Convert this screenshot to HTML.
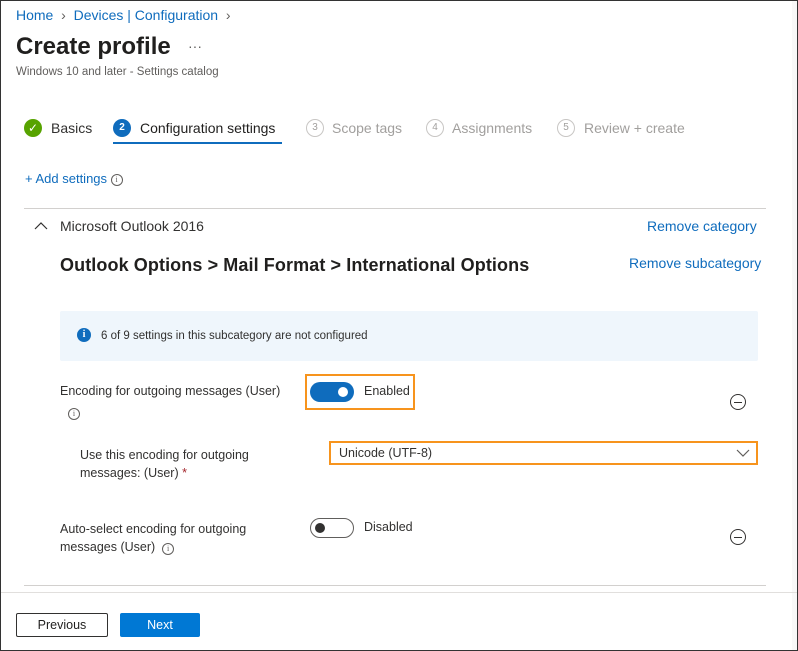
<!DOCTYPE html>
<html><head><style>
*{margin:0;padding:0;box-sizing:border-box}
body{width:798px;height:651px;overflow:hidden;background:#fff;font-family:"Liberation Sans",sans-serif;color:#323130;position:relative}
.frame{position:absolute;left:0;top:0;width:798px;height:651px;border:1px solid #333;pointer-events:none;z-index:9}
.a{position:absolute;white-space:nowrap}
.blue{color:#0f6cbd}
.gray{color:#a19f9d}
.circ{position:absolute;width:18px;height:18px;border-radius:50%;font-size:10px;text-align:center;line-height:16px}
.info{display:inline-block;width:12px;height:12px;border:1px solid #605e5c;border-radius:50%;font-size:8px;line-height:10px;text-align:center;color:#605e5c;font-family:"Liberation Serif",serif}
.minus{position:absolute;width:16px;height:16px;border:1.3px solid #323130;border-radius:50%}
.minus:after{content:"";position:absolute;left:3px;right:3px;top:6.5px;height:1.3px;background:#323130}
</style></head><body>
<div class="frame"></div>
<div style="position:absolute;right:1px;top:1px;width:5px;height:649px;background:#f8f8f8"></div>
<div class="a blue" style="left:16px;top:7px;font-size:14px">Home <span style="color:#605e5c">&nbsp;›&nbsp;</span> Devices | Configuration <span style="color:#605e5c">&nbsp;›</span></div>
<div class="a" style="left:16px;top:33px;font-size:24px;font-weight:600;color:#201f1e">Create profile</div>
<div class="a" style="left:188px;top:38px;font-size:14px;color:#605e5c">···</div>
<div class="a" style="left:16px;top:66px;font-size:11.5px;color:#605e5c">Windows 10 and later - Settings catalog</div>

<div class="circ" style="left:24px;top:119px;background:#57a300;color:#fff;font-size:12px;line-height:18px">✓</div>
<div class="a" style="left:51px;top:120px;font-size:14px">Basics</div>
<div class="circ" style="left:113px;top:119px;background:#0f6cbd;color:#fff;line-height:18px;font-weight:bold">2</div>
<div class="a" style="left:140px;top:120px;font-size:14px;color:#201f1e">Configuration settings</div>
<div style="position:absolute;left:113px;top:142px;width:169px;height:2px;background:#0f6cbd"></div>
<div class="circ gray" style="left:306px;top:119px;border:1px solid #c8c6c4">3</div>
<div class="a gray" style="left:332px;top:120px;font-size:14px">Scope tags</div>
<div class="circ gray" style="left:426px;top:119px;border:1px solid #c8c6c4">4</div>
<div class="a gray" style="left:452px;top:120px;font-size:14px">Assignments</div>
<div class="circ gray" style="left:557px;top:119px;border:1px solid #c8c6c4">5</div>
<div class="a gray" style="left:584px;top:120px;font-size:14px">Review + create</div>

<div class="a blue" style="left:25px;top:171px;font-size:13px">+ Add settings <span class="info" style="vertical-align:1px">i</span></div>

<div style="position:absolute;left:24px;top:208px;width:742px;height:1px;background:#d2d0ce"></div>
<svg style="position:absolute;left:34px;top:221px" width="14" height="10"><path d="M1 8l6-6 6 6" fill="none" stroke="#323130" stroke-width="1.2"/></svg>
<div class="a" style="left:60px;top:218px;font-size:14px">Microsoft Outlook 2016</div>
<div class="a blue" style="left:647px;top:218px;font-size:14px">Remove category</div>
<div class="a" style="left:60px;top:255px;font-size:18px;font-weight:bold;color:#201f1e;letter-spacing:0.1px">Outlook Options &gt; Mail Format &gt; International Options</div>
<div class="a blue" style="left:629px;top:255px;font-size:14px">Remove subcategory</div>

<div style="position:absolute;left:60px;top:311px;width:698px;height:50px;background:#eff6fc;border-radius:2px"></div>
<div class="circ" style="left:77px;top:328px;width:14px;height:14px;background:#0f6cbd;color:#fff;font-size:10px;line-height:14px;font-weight:bold;font-family:'Liberation Serif',serif">i</div>
<div class="a" style="left:101px;top:330px;font-size:11.5px">6 of 9 settings in this subcategory are not configured</div>

<div class="a" style="left:60px;top:384px;font-size:12.5px">Encoding for outgoing messages (User)</div>
<div class="a" style="left:68px;top:403px"><span class="info">i</span></div>
<div style="position:absolute;left:305px;top:374px;width:110px;height:36px;border:2px solid #f7941d"></div>
<div style="position:absolute;left:310px;top:382px;width:44px;height:20px;border-radius:10px;background:#0f6cbd"></div>
<div style="position:absolute;left:338px;top:387px;width:10px;height:10px;border-radius:50%;background:#fff"></div>
<div class="a" style="left:364px;top:384px;font-size:12.5px">Enabled</div>
<div class="minus" style="left:730px;top:394px"></div>

<div class="a" style="left:80px;top:446px;font-size:12.5px;line-height:18px">Use this encoding for outgoing<br>messages: (User) <span style="color:#a4262c">*</span></div>
<div style="position:absolute;left:329px;top:441px;width:429px;height:24px;border:2px solid #f7941d"></div>
<div class="a" style="left:339px;top:446px;font-size:12.5px">Unicode (UTF-8)</div>
<svg style="position:absolute;left:736px;top:448px" width="14" height="10"><path d="M1 2l6 6 6-6" fill="none" stroke="#605e5c" stroke-width="1.2"/></svg>

<div class="a" style="left:60px;top:520px;font-size:12.5px;line-height:18px">Auto-select encoding for outgoing<br>messages (User) &nbsp;<span class="info">i</span></div>
<div style="position:absolute;left:310px;top:518px;width:44px;height:20px;border-radius:10px;border:1px solid #605e5c"></div>
<div style="position:absolute;left:315px;top:523px;width:10px;height:10px;border-radius:50%;background:#323130"></div>
<div class="a" style="left:364px;top:520px;font-size:12.5px">Disabled</div>
<div class="minus" style="left:730px;top:529px"></div>

<div style="position:absolute;left:24px;top:585px;width:742px;height:1px;background:#d2d0ce"></div>
<div style="position:absolute;left:0;top:592px;width:798px;height:1px;background:#e1dfdd"></div>
<div style="position:absolute;left:16px;top:613px;width:92px;height:24px;border:1px solid #323130;border-radius:2px;font-size:12.5px;text-align:center;line-height:22px;font-family:'Liberation Sans Narrow','Liberation Sans',sans-serif;color:#201f1e">Previous</div>
<div style="position:absolute;left:120px;top:613px;width:80px;height:24px;background:#0078d4;border-radius:2px;color:#fff;font-size:12.5px;text-align:center;line-height:24px;font-family:'Liberation Sans Narrow','Liberation Sans',sans-serif">Next</div>
</body></html>
